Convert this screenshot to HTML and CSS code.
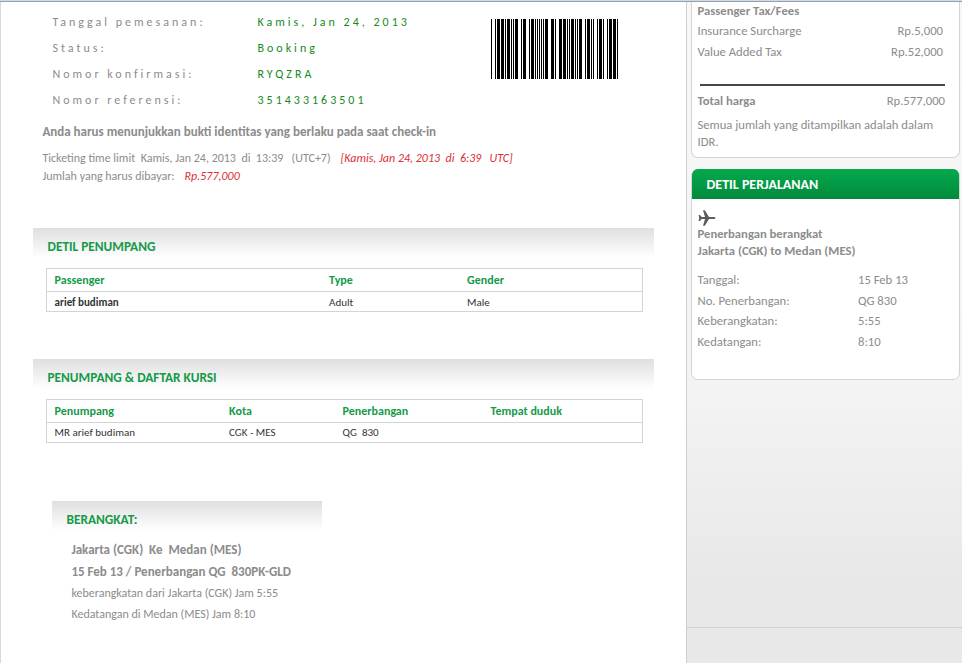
FILE: index.html
```
<!DOCTYPE html>
<html lang="id">
<head>
<meta charset="utf-8">
<title>Booking</title>
<link rel="stylesheet" href="styles.css">
</head>
<body>
<div class="page">
  <main class="main">
    <div class="summary">
      <dl class="facts">
        <dt>Tanggal pemesanan:</dt><dd>Kamis, Jan 24, 2013</dd>
        <dt>Status:</dt><dd>Booking</dd>
        <dt>Nomor konfirmasi:</dt><dd>RYQZRA</dd>
        <dt>Nomor referensi:</dt><dd>351433163501</dd>
      </dl>
      <svg class="barcode" width="127" height="60" viewBox="0 0 127 60" shape-rendering="crispEdges">
        <path d="M0 0h1v60h-1zM4 0h1v60h-1zM6 0h3v60h-3zM10 0h3v60h-3zM14 0h1v60h-1z
          M16 0h3v60h-3zM20 0h1v60h-1zM22 0h1v60h-1zM24 0h3v60h-3zM30 0h1v60h-1z
          M32 0h3v60h-3zM38 0h1v60h-1zM40 0h3v60h-3zM44 0h1v60h-1zM46 0h1v60h-1z
          M48 0h1v60h-1zM50 0h1v60h-1zM52 0h1v60h-1zM54 0h3v60h-3zM60 0h3v60h-3z
          M64 0h1v60h-1zM68 0h3v60h-3zM72 0h3v60h-3zM76 0h1v60h-1zM78 0h1v60h-1z
          M80 0h3v60h-3zM84 0h1v60h-1zM86 0h1v60h-1zM88 0h3v60h-3zM94 0h1v60h-1z
          M96 0h3v60h-3zM100 0h1v60h-1zM102 0h1v60h-1zM106 0h1v60h-1zM108 0h3v60h-3z
          M112 0h1v60h-1zM116 0h1v60h-1zM118 0h3v60h-3zM122 0h3v60h-3zM126 0h1v60h-1z"/>
      </svg>
    </div>
    <p class="notice">Anda harus menunjukkan bukti identitas yang berlaku pada saat check-in</p>
    <p class="limit">Ticketing time limit  Kamis, Jan 24, 2013  di  13:39   (UTC+7)<em>[Kamis, Jan 24, 2013  di  6:39   UTC]</em></p>
    <p class="limit">Jumlah yang harus dibayar:<em>Rp.577,000</em></p>

    <h2 class="band band-passenger">DETIL PENUMPANG</h2>
    <table class="grid">
      <colgroup><col class="p1"><col class="p2"><col></colgroup>
      <tr><th>Passenger</th><th>Type</th><th>Gender</th></tr>
      <tr class="low"><td><b>arief budiman</b></td><td>Adult</td><td>Male</td></tr>
    </table>

    <h2 class="band band-seats">PENUMPANG &amp; DAFTAR KURSI</h2>
    <table class="grid">
      <colgroup><col class="s1"><col class="s2"><col class="s3"><col></colgroup>
      <tr><th>Penumpang</th><th>Kota</th><th>Penerbangan</th><th>Tempat duduk</th></tr>
      <tr><td>MR arief budiman</td><td>CGK - MES</td><td>QG  830</td><td></td></tr>
    </table>

    <section class="depart">
      <h2 class="band">BERANGKAT:</h2>
      <p class="strong">Jakarta (CGK)  Ke  Medan (MES)</p>
      <p class="strong">15 Feb 13 / Penerbangan QG  830PK-GLD</p>
      <p>keberangkatan dari Jakarta (CGK) Jam 5:55</p>
      <p>Kedatangan di Medan (MES) Jam 8:10</p>
    </section>
  </main>

  <aside class="side">
    <div class="side-top">
      <section class="card fees">
        <h3>Passenger Tax/Fees</h3>
        <div class="row"><span>Insurance Surcharge</span><span>Rp.5,000</span></div>
        <div class="row"><span>Value Added Tax</span><span>Rp.52,000</span></div>
        <hr>
        <div class="row total"><b>Total harga</b><span>Rp.577,000</span></div>
        <p class="note">Semua jumlah yang ditampilkan adalah dalam IDR.</p>
      </section>
      <section class="card trip">
        <h2 class="trip-head">DETIL PERJALANAN</h2>
        <div class="trip-body">
          <svg class="plane" width="18" height="16" viewBox="0 0 18 16"><path d="M17.500 8c0 .6-1 1-2.200 1H11L6.800 15.700H5L7 9H3.700L1.900 11H.5L1.300 8L.5 5H1.900L3.700 7H7L5 .3H6.800L11 7H15.300C16.500 7 17.500 7.400 17.500 8z"/></svg>
          <h3>Penerbangan berangkat<br>Jakarta (CGK) to Medan (MES)</h3>
          <dl class="times">
            <dt>Tanggal:</dt><dd>15 Feb 13</dd>
            <dt>No. Penerbangan:</dt><dd>QG 830</dd>
            <dt>Keberangkatan:</dt><dd>5:55</dd>
            <dt>Kedatangan:</dt><dd>8:10</dd>
          </dl>
        </div>
      </section>
    </div>
  </aside>
</div>
</body>
</html>
```
FILE: styles.css
```
* { box-sizing: border-box; }
body, p, h2, h3, dl, dd { margin: 0; }
body {
  font: 12px/18px Carlito, Calibri, Lato, sans-serif;
  color: #8c8c8c;
  background: #fff;
  border-top: 1px solid #d3dbe1;
}
.page {
  display: grid;
  grid-template-columns: 686px 276px;
  height: 662px;
  overflow: hidden;
  border-top: 1px solid #93a1ac;
}
.main {
  border-left: 1px solid #d9d9d9;
  padding: 7px 32px 0;
}
.facts dd, .limit, .grid td, .depart p { white-space: pre; }

.summary { display: flex; align-items: flex-start; height: 110px; padding-left: 19.4px; }
.facts {
  display: grid;
  grid-template-columns: 205.1px 233.5px;
  line-height: 26px;
  letter-spacing: 3px;
}
.facts dd { color: #168a1e; }
.barcode { margin-top: 10px; fill: #000; }

.notice { margin-left: 9.4px; font-size: 13px; line-height: 26px; font-weight: bold; }
.limit { margin-left: 9.4px; }
.notice + .limit { margin-top: 4px; }
.limit em { margin-left: 10px; color: #dc3038; }

.band {
  height: 30px;
  padding: 5px 14.5px 0;
  font-size: 13.33px;
  line-height: 28px;
  color: #149a49;
  background: linear-gradient(#dfdfdf, #fff);
}
.band-passenger { width: 621px; margin-top: 43px; }
.band-seats { width: 621px; margin-top: 47px; }

.grid {
  width: 597px;
  margin: 10px 0 0 13px;
  border: 1px solid #d3d4d5;
  border-collapse: collapse;
  table-layout: fixed;
}
.grid th, .grid td { padding: 0 0 0 7.6px; text-align: left; }
.grid th { height: 23px; font-size: 12px; line-height: 22px; color: #149a49; }
.grid td { height: 20px; font-size: 11px; line-height: 19px; color: #333; border-top: 1px solid #d3d4d5; }
.grid .low td { padding-top: 2px; line-height: 17px; }
.p1 { width: 275px; }
.p2 { width: 138px; }
.s1 { width: 175px; }
.s2 { width: 113.5px; }
.s3 { width: 148px; }

.depart { width: 270px; margin: 58px 0 0 19px; }
.depart p { margin-left: 19.4px; line-height: 21px; }
.depart .band { margin-bottom: 8px; }
.depart .strong { font-size: 13px; line-height: 22px; font-weight: bold; }

.side {
  border-left: 1px solid #cfcfcf;
  background: #e8e8e8;
  font-size: 12.667px;
}
.side-top {
  height: 626px;
  padding: 0 2px 0 4px;
  border-bottom: 1px solid #d0d0d0;
  background: linear-gradient(#f8f8f8 0, #f3f3f3 390px, #e8e8e8 580px);
}
.side h3 { font-size: inherit; line-height: 17px; }
.card { border: 1px solid #d4d4d4; border-radius: 7px; background: #fff; }
.fees { height: 156px; padding: 0 0 0 5.5px; border-top: 0; border-radius: 0 0 7px 7px; }
.fees h3 { margin-bottom: 1px; }
.row { display: flex; justify-content: space-between; padding-right: 16px; line-height: 21px; }
.fees hr { width: 245px; height: 2px; margin: 22px 0 4px 2.5px; border: 0; background: #4a464a; }
.total { padding-right: 14px; }
.note { width: 245px; margin-top: 5px; line-height: 17px; }
.trip { height: 211px; margin-top: 11px; }
.trip-head {
  height: 30px;
  margin: -1px 0 0;
  padding-left: 14.5px;
  border-radius: 6px 6px 0 0;
  font-size: 14px;
  line-height: 31px;
  color: #fff;
  background: linear-gradient(#04a94c, #028a3e);
}
.trip-body { padding: 11px 0 0 5.5px; }
.plane { display: block; margin-bottom: -1px; fill: #5c5c5c; }
.times { display: grid; grid-template-columns: 160.5px 1fr; margin-top: 11px; line-height: 20.667px; }
```
